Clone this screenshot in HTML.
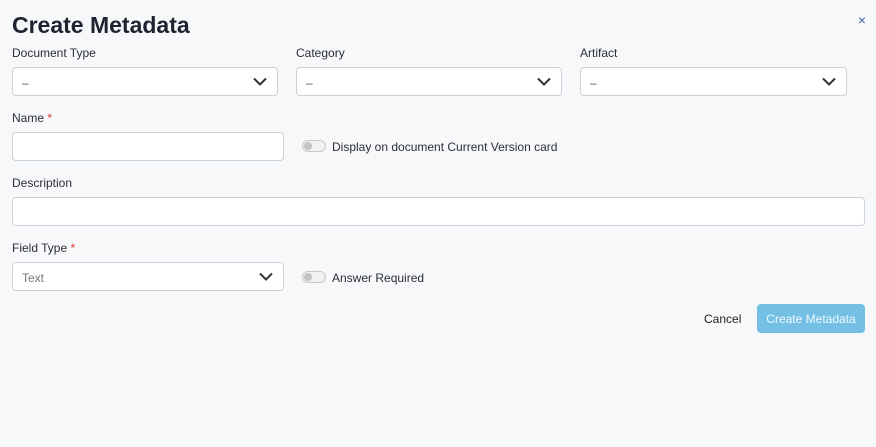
<!DOCTYPE html>
<html><head><meta charset="utf-8"><style>
*{box-sizing:border-box;margin:0;padding:0}
body{width:876px;height:447px;background:#f7f8fa;font-family:"Liberation Sans",sans-serif;color:#212529;position:relative;overflow:hidden}
.a{position:absolute}
h1{position:absolute;left:12px;top:12px;font-size:23px;font-weight:bold;color:#1e2330}
.lbl{position:absolute;font-size:12px;color:#2b2f36}
.req{color:#e03535}
.box{position:absolute;background:#fff;border:1px solid #cdd1d8;border-radius:4px;height:29px}
.dash{position:absolute;left:9px;top:8px;font-size:12px;color:#555}
.chev{position:absolute;right:10px;top:9px}
.tog{position:absolute;width:24px;height:12px;border:1px solid #c8c8c8;border-radius:7px;background:#f1f1f1}
.tog::after{content:"";position:absolute;left:1px;top:1px;width:8px;height:8px;border-radius:50%;background:#c4c4c4}
.tl{position:absolute;font-size:12px;color:#2b2f36}
</style></head><body>
<h1>Create Metadata</h1>
<div class="a" style="right:10px;top:12px;font-size:14px;color:#4a62a8">×</div>

<div class="lbl" style="left:12px;top:46px">Document Type</div>
<div class="lbl" style="left:296px;top:46px">Category</div>
<div class="lbl" style="left:580px;top:46px">Artifact</div>
<div class="box" style="left:12px;top:67px;width:266px"><span class="dash">–</span><svg class="chev" width="14" height="9" viewBox="0 0 14 9"><path d="M1 1.5l6 6 6-6" fill="none" stroke="#333" stroke-width="2"/></svg></div>
<div class="box" style="left:296px;top:67px;width:266px"><span class="dash">–</span><svg class="chev" width="14" height="9" viewBox="0 0 14 9"><path d="M1 1.5l6 6 6-6" fill="none" stroke="#333" stroke-width="2"/></svg></div>
<div class="box" style="left:580px;top:67px;width:267px"><span class="dash">–</span><svg class="chev" width="14" height="9" viewBox="0 0 14 9"><path d="M1 1.5l6 6 6-6" fill="none" stroke="#333" stroke-width="2"/></svg></div>

<div class="lbl" style="left:12px;top:111px">Name <span class="req">*</span></div>
<div class="box" style="left:12px;top:132px;width:272px"></div>
<div class="tog" style="left:302px;top:140px"></div>
<div class="tl" style="left:332px;top:140px">Display on document Current Version card</div>

<div class="lbl" style="left:12px;top:176px">Description</div>
<div class="box" style="left:12px;top:197px;width:853px"></div>

<div class="lbl" style="left:12px;top:241px">Field Type <span class="req">*</span></div>
<div class="box" style="left:12px;top:262px;width:272px"><span class="dash" style="color:#777">Text</span><svg class="chev" width="14" height="9" viewBox="0 0 14 9"><path d="M1 1.5l6 6 6-6" fill="none" stroke="#333" stroke-width="2"/></svg></div>
<div class="tog" style="left:302px;top:271px"></div>
<div class="tl" style="left:332px;top:271px">Answer Required</div>

<div class="a" style="left:704px;top:312px;font-size:12px;color:#222">Cancel</div>
<div class="a" style="left:757px;top:304px;width:108px;height:29px;background:#74c0e5;border-radius:4px;color:#eef8fd;font-size:12px;text-align:center;line-height:31px">Create Metadata</div>
</body></html>
